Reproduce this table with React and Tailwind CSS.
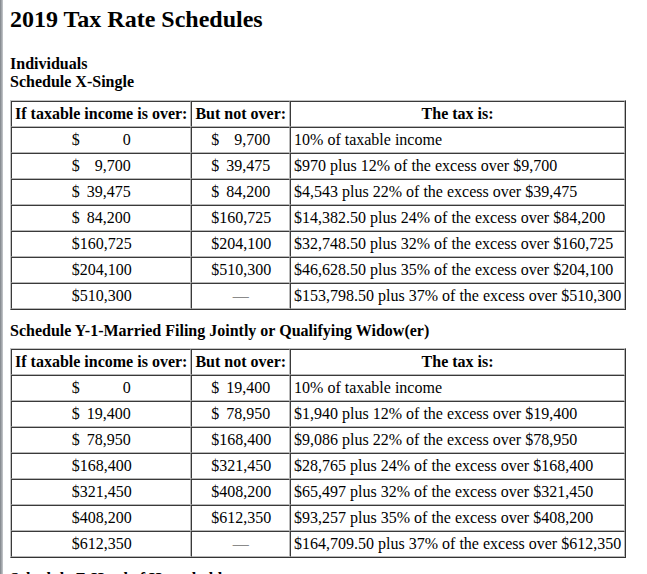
import React from "react";

const single = [
  ["0", "9,700", "10% of taxable income"],
  ["9,700", "39,475", "$970 plus 12% of the excess over $9,700"],
  ["39,475", "84,200", "$4,543 plus 22% of the excess over $39,475"],
  ["84,200", "160,725", "$14,382.50 plus 24% of the excess over $84,200"],
  ["160,725", "204,100", "$32,748.50 plus 32% of the excess over $160,725"],
  ["204,100", "510,300", "$46,628.50 plus 35% of the excess over $204,100"],
  ["510,300", null, "$153,798.50 plus 37% of the excess over $510,300"],
];

const married = [
  ["0", "19,400", "10% of taxable income"],
  ["19,400", "78,950", "$1,940 plus 12% of the excess over $19,400"],
  ["78,950", "168,400", "$9,086 plus 22% of the excess over $78,950"],
  ["168,400", "321,450", "$28,765 plus 24% of the excess over $168,400"],
  ["321,450", "408,200", "$65,497 plus 32% of the excess over $321,450"],
  ["408,200", "612,350", "$93,257 plus 35% of the excess over $408,200"],
  ["612,350", null, "$164,709.50 plus 37% of the excess over $612,350"],
];

const cell =
  "border border-t-[#3a3a3a] border-l-[#3a3a3a] border-b-[#b8b8b8] border-r-[#b8b8b8] px-[3px] py-[3px] leading-[18px]";

function Money({ v }) {
  return (
    <span className="inline-flex w-[59px] justify-between">
      <span>$</span>
      <span>{v}</span>
    </span>
  );
}

function Schedule({ rows }) {
  return (
    <table className="border-separate border-spacing-0 border border-t-[#c4c4c4] border-l-[#c4c4c4] border-b-[#333] border-r-[#333] text-[16px]">
      <thead>
        <tr>
          <th className={cell + " font-bold text-left"}>If taxable income is over:</th>
          <th className={cell + " font-bold text-left"}>But not over:</th>
          <th className={cell + " font-bold text-center"}>The tax is:</th>
        </tr>
      </thead>
      <tbody>
        {rows.map((r, i) => (
          <tr key={i}>
            <td className={cell + " text-center"}>
              <Money v={r[0]} />
            </td>
            <td className={cell + " text-center"}>
              {r[1] ? <Money v={r[1]} /> : <span className="text-[#8a8a8a]">—</span>}
            </td>
            <td className={cell + " text-left whitespace-nowrap"}>{r[2]}</td>
          </tr>
        ))}
      </tbody>
    </table>
  );
}

export default function App() {
  return (
    <div
      className="flex h-[574px] w-[647px] overflow-hidden bg-white text-black"
      style={{ fontFamily: '"Liberation Serif", "Times New Roman", serif' }}
    >
      <div className="w-[3px] shrink-0 self-stretch bg-gradient-to-r from-[#7d8288] to-[#c9cccf]" />
      <div className="flex flex-col pl-[7px]">
        <h1 className="mt-[5px] text-[24px] font-bold leading-[28px]">2019 Tax Rate Schedules</h1>
        <div className="mt-[22px] text-[16px] font-bold leading-[18px]">Individuals</div>
        <div className="text-[16px] font-bold leading-[18px]">Schedule X-Single</div>
        <div className="mt-[9px]">
          <Schedule rows={single} />
        </div>
        <div className="mt-[12px] text-[16px] font-bold leading-[18px]">
          Schedule Y-1-Married Filing Jointly or Qualifying Widow(er)
        </div>
        <div className="mt-[8px]">
          <Schedule rows={married} />
        </div>
        <div className="mt-[12px] text-[16px] font-bold leading-[18px]">
          Schedule Z-Head of Household
        </div>
      </div>
    </div>
  );
}
